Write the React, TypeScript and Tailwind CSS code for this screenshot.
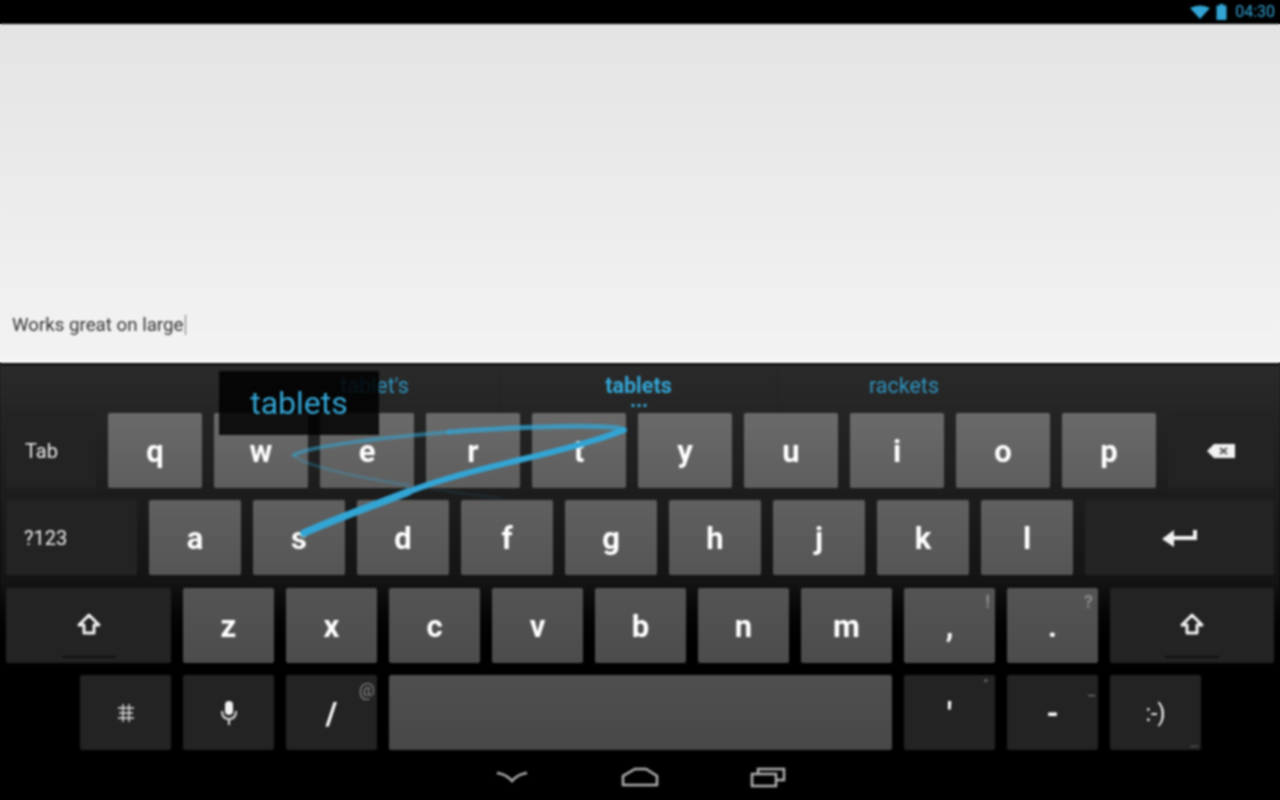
import React from "react";

const font = "font-['Roboto',sans-serif]";

const rowBg = [
  "bg-gradient-to-b from-[#6a6a6a] to-[#5e5e5e]",
  "bg-gradient-to-b from-[#606060] to-[#555555]",
  "bg-gradient-to-b from-[#545454] to-[#4c4c4c]",
  "bg-gradient-to-b from-[#4f4f4f] to-[#484848]",
];

function Key({ w, row, dark, label, small, hint, children, align }: { w: string; row: number; dark?: boolean; label?: string; small?: boolean; hint?: React.ReactNode; children?: React.ReactNode; align?: string }) {
  return (
    <div className={`relative flex h-[75px] shrink-0 items-center rounded-[2px] text-white ${align ?? "justify-center pt-[2px]"} ${w} ${dark ? "bg-[#232323]" : rowBg[row]}`}>
      {label ? <span className={small ? "text-[20px] font-normal text-[#eeeeee]" : "text-[31px] font-bold leading-none"}>{label}</span> : null}
      {children}
      {hint}
    </div>
  );
}

function Hint({ children, className }: { children: React.ReactNode; className: string }) {
  return <span className={`absolute leading-none text-[#8a8a8a] ${className}`}>{children}</span>;
}

function Row({ children, className }: { children: React.ReactNode; className: string }) {
  return <div className={`flex gap-[12px] ${className}`}>{children}</div>;
}

function ShiftIcon() {
  return (
    <>
      <svg width="26" height="24" viewBox="0 0 26 24" className="mb-[4px]">
        <path d="M13 3 L23 13 H18 V21 H8 V13 H3 Z" fill="none" stroke="#f2f2f2" strokeWidth="3" strokeLinejoin="round" />
      </svg>
      <span className="absolute bottom-[5px] left-1/2 h-[2px] w-[54px] -translate-x-1/2 bg-[#111111]" />
    </>
  );
}

export default function App() {
  const r1 = ["q", "w", "e", "r", "t", "y", "u", "i", "o", "p"];
  const r2 = ["a", "s", "d", "f", "g", "h", "j", "k", "l"];
  const r3 = ["z", "x", "c", "v", "b", "n", "m"];
  return (
    <div className="h-[800px] w-[1280px] overflow-hidden bg-[linear-gradient(#000_24px,#e4e4e4_24px,#f3f3f3_362px,#1c1c1c_362px,#000_600px)]">
      <div className={`relative flex h-[800px] w-[1280px] flex-col blur-[0.9px] ${font}`}>
        <div className="flex h-[24px] shrink-0 items-center justify-end gap-[6px] bg-black pr-[5px] text-[#33a5d5]">
          <svg width="20" height="14" viewBox="0 0 20 14"><path d="M0 3 Q10 -2 20 3 L10 14 Z" fill="#33a5d5" /></svg>
          <svg width="11" height="16" viewBox="0 0 11 16"><path d="M3.5 0 H7.5 V1.5 H10.5 V16 H0.5 V1.5 H3.5 Z" fill="#33a5d5" /></svg>
          <span className="ml-[2px] text-[16px] leading-none">04:30</span>
        </div>

        <div className="flex h-[339px] shrink-0 items-end border-b-2 border-white bg-gradient-to-b from-[#e4e4e4] to-[#f3f3f3] pb-[25px] pl-[12px]">
          <span className="text-[18.7px] leading-[22px] text-[#333333]">Works great on large</span>
          <span className="mb-px ml-[2px] h-[20px] w-px bg-[#777777]" />
        </div>

        <div className="relative flex h-[437px] shrink-0 flex-col bg-gradient-to-b from-[#2a2a2a] via-[#141414] via-50% to-black to-70% pl-[6px]">
          <div className="-ml-[6px] flex h-[50px] border-t-2 border-black pl-[250px] text-[21.5px] text-[#2f93bd]">
            <div className="flex w-[250px] items-center justify-center border-r border-[#222222] pb-[5px]">tablet's</div>
            <div className="relative flex w-[278px] items-center justify-center border-r border-[#222222] pb-[5px] font-bold text-[#33a5d5]">
              tablets
              <span className="absolute bottom-[6px] left-1/2 flex -translate-x-1/2 gap-[3px]">
                <i className="h-[3px] w-[3px] bg-[#33a5d5]" /><i className="h-[3px] w-[3px] bg-[#33a5d5]" /><i className="h-[3px] w-[3px] bg-[#33a5d5]" />
              </span>
            </div>
            <div className="flex w-[252px] items-center justify-center pb-[5px]">rackets</div>
          </div>

          <Row className="">
            <Key w="w-[90px]" row={0} dark label="Tab" small align="justify-start pl-[19px]" />
            {r1.map((k) => <Key key={k} w="w-[94px]" row={0} label={k} />)}
            <Key w="w-[106px]" row={0} dark align="justify-center">
              <svg width="30" height="16" viewBox="0 0 30 16">
                <path d="M8 1 H29 V15 H8 L1 8 Z" fill="#f2f2f2" />
                <path d="M14 5 L21 11 M21 5 L14 11" stroke="#555555" strokeWidth="2" />
              </svg>
            </Key>
          </Row>

          <Row className="mt-[12px]">
            <Key w="w-[131px]" row={1} dark label="?123" small align="justify-start pl-[18px]" />
            {r2.map((k) => <Key key={k} w="w-[92px]" row={1} label={k} />)}
            <Key w="w-[189px]" row={1} dark align="justify-center">
              <svg width="38" height="22" viewBox="0 0 38 22">
                <path d="M1 12 L13 3 V9 H32 V3 H36 V13 H13 V20 Z" fill="#f2f2f2" />
              </svg>
            </Key>
          </Row>

          <Row className="mt-[13px]">
            <Key w="w-[165px]" row={2} dark align="justify-center"><ShiftIcon /></Key>
            {r3.map((k) => <Key key={k} w="w-[91px]" row={2} label={k} />)}
            <Key w="w-[91px]" row={2} label="," hint={<Hint className="right-[5px] top-[5px] text-[18px] font-bold">!</Hint>} />
            <Key w="w-[91px]" row={2} label="." hint={<Hint className="right-[5px] top-[5px] text-[18px] font-bold">?</Hint>} />
            <Key w="w-[164px]" row={2} dark align="justify-center"><ShiftIcon /></Key>
          </Row>

          <Row className="mt-[12px] pl-[74px]">
            <Key w="w-[91px]" row={3} dark align="justify-center">
              <svg width="18" height="18" viewBox="0 0 18 18" stroke="#e4e4e4" strokeWidth="1.4" fill="none">
                <path d="M6 0 V18 M12 0 V18 M1 4 H17 M2 9 H16 M1 14 H17" />
              </svg>
            </Key>
            <Key w="w-[91px]" row={3} dark align="justify-center">
              <svg width="20" height="26" viewBox="0 0 20 26">
                <rect x="6" y="1" width="8" height="14" rx="4" fill="#f2f2f2" />
                <path d="M3 11 Q3 19 10 19 Q17 19 17 11 M10 19 V25" fill="none" stroke="#e0e0e0" strokeWidth="2" />
              </svg>
            </Key>
            <Key w="w-[91px]" row={3} dark label="/" hint={<Hint className="right-[2px] top-[6px] text-[18px]">@</Hint>} />
            <Key w="w-[503px]" row={3} />
            <Key w="w-[91px]" row={3} dark label="'" hint={<Hint className="right-[7px] top-[3px] text-[13px]">"</Hint>} />
            <Key w="w-[91px]" row={3} dark label="-" hint={<Hint className="right-[3px] top-[8px] text-[15px]">_</Hint>} />
            <Key w="w-[91px]" row={3} dark hint={<Hint className="bottom-[1px] right-[3px] text-[9px] font-bold">...</Hint>}>
              <span className="text-[23px] leading-none">:-)</span>
            </Key>
          </Row>

          <div className="-ml-[6px] flex flex-1 items-center justify-center pt-[4px]">
            <div className="flex w-[128px] justify-center">
              <svg width="32" height="12" viewBox="0 0 32 12"><path d="M1 2 Q10 3 16 10 Q22 3 31 2" fill="none" stroke="#b0b0b0" strokeWidth="2.5" /></svg>
            </div>
            <div className="flex w-[128px] justify-center">
              <svg width="38" height="20" viewBox="0 0 38 20"><path d="M2 18 V9 L14 2 H25 L36 9 V18 Z" fill="none" stroke="#b0b0b0" strokeWidth="2.5" /></svg>
            </div>
            <div className="flex w-[128px] justify-center">
              <svg width="36" height="22" viewBox="0 0 36 22" fill="none" stroke="#b0b0b0" strokeWidth="2.5">
                <rect x="2" y="8" width="24" height="12" />
                <path d="M8 8 V3 H34 V14 H26" />
              </svg>
            </div>
          </div>

          <div className="absolute left-[219px] top-[8px] flex h-[64px] w-[160px] items-center justify-center bg-black/85 text-[32px] text-[#33a5d5]">tablets</div>
        </div>

        <svg className="pointer-events-none absolute left-0 top-0" width="1280" height="800" viewBox="0 0 1280 800" fill="none" strokeLinecap="round">
          <path d="M408 492 C 474 466 560 455 624 430" stroke="#33a5d5" strokeWidth="6" />
          <path d="M304 533 C 340 517 375 505 408 492" stroke="#33a5d5" strokeWidth="7.5" />
          <path d="M624 430 C 615 424 520 426 449 432" stroke="#33a5d5" strokeWidth="5" strokeOpacity="0.75" />
          <path d="M449 432 C 380 438 310 446 294 455" stroke="#33a5d5" strokeWidth="4" strokeOpacity="0.55" />
          <path d="M294 455 C 300 465 360 478 408 485" stroke="#33a5d5" strokeWidth="3" strokeOpacity="0.3" />
          <path d="M408 485 C 450 492 480 496 500 498" stroke="#33a5d5" strokeWidth="2" strokeOpacity="0.12" />
        </svg>
      </div>
    </div>
  );
}
